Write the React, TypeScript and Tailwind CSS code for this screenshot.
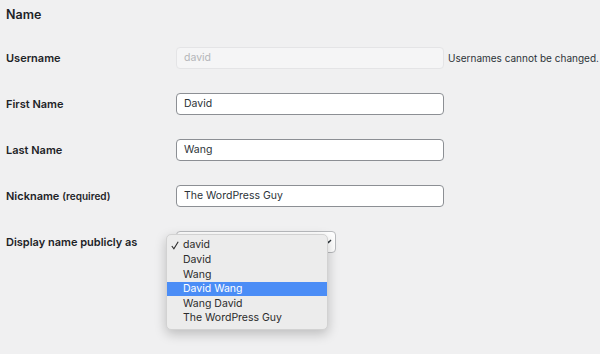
import React from "react";

const font = { fontFamily: "Inter, 'Noto Sans', 'Liberation Sans', sans-serif" };

function Row({ label, children }: { label: React.ReactNode; children: React.ReactNode }) {
  return (
    <div className="flex h-[22px] items-center">
      <div className="w-[176px] shrink-0 pl-[6px] text-[11px] font-semibold text-[#1d2327]">{label}</div>
      {children}
    </div>
  );
}

function TextInput({ value }: { value: string }) {
  return (
    <div className="flex h-[22px] w-[268px] shrink-0 items-center rounded-[4px] border border-[#8c8f94] bg-white pl-[7px] text-[10.5px] text-[#2c3338]">
      {value}
    </div>
  );
}

export default function App() {
  const options = ["david", "David", "Wang", "David Wang", "Wang David", "The WordPress Guy"];
  return (
    <div className="h-[354px] w-[600px] overflow-hidden bg-[#f0f0f1]" style={font}>
      <div className="flex flex-col gap-[24px] pt-[7px]">
        <div className="h-[16px] pl-[6px] text-[12.5px] font-semibold leading-[16px] text-[#1d2327]">Name</div>
        <Row label="Username">
          <div className="flex h-[22px] w-[268px] shrink-0 items-center rounded-[4px] border border-[#e4e4e6] bg-[#f5f5f6] pl-[7px] text-[10.5px] text-[#b4b6b9]">
            david
          </div>
          <div className="whitespace-nowrap pl-[4px] text-[10px] text-[#2c3338]">Usernames cannot be changed.</div>
        </Row>
        <Row label="First Name">
          <TextInput value="David" />
        </Row>
        <Row label="Last Name">
          <TextInput value="Wang" />
        </Row>
        <Row label={<span>Nickname <span className="text-[10px]">(required)</span></span>}>
          <TextInput value="The WordPress Guy" />
        </Row>
        <Row label="Display name publicly as">
          <div className="relative h-[22px] w-[160px] rounded-[4px] border border-[#b9bbbe] bg-white">
            <svg className="absolute right-[3px] top-[7px]" width="7" height="5" viewBox="0 0 7 5">
              <path d="M1 1 L3.5 3.5 L6 1" stroke="#2c3338" strokeWidth="1.4" fill="none" />
            </svg>
            <div className="absolute left-[-11px] top-[2px] z-10 w-[162px] rounded-[5px] border border-[#d2d2d2] bg-[#ececec] py-[3px] shadow-[0_4px_12px_rgba(0,0,0,0.22)]">
              {options.map((o, i) => (
                <div
                  key={o}
                  className={
                    "relative flex h-[14.6px] items-center pl-[16px] text-[10.5px] " +
                    (i === 3 ? "bg-[#4b8df6] text-white" : "text-[#2b2b2b]")
                  }
                >
                  {i === 0 && (
                    <svg className="absolute left-[4px] top-[3px]" width="8" height="9" viewBox="0 0 8 9">
                      <path d="M0.8 5 L2.9 7.8 L7.2 0.8" stroke="#2b2b2b" strokeWidth="1.1" fill="none" />
                    </svg>
                  )}
                  {o}
                </div>
              ))}
            </div>
          </div>
        </Row>
      </div>
    </div>
  );
}
